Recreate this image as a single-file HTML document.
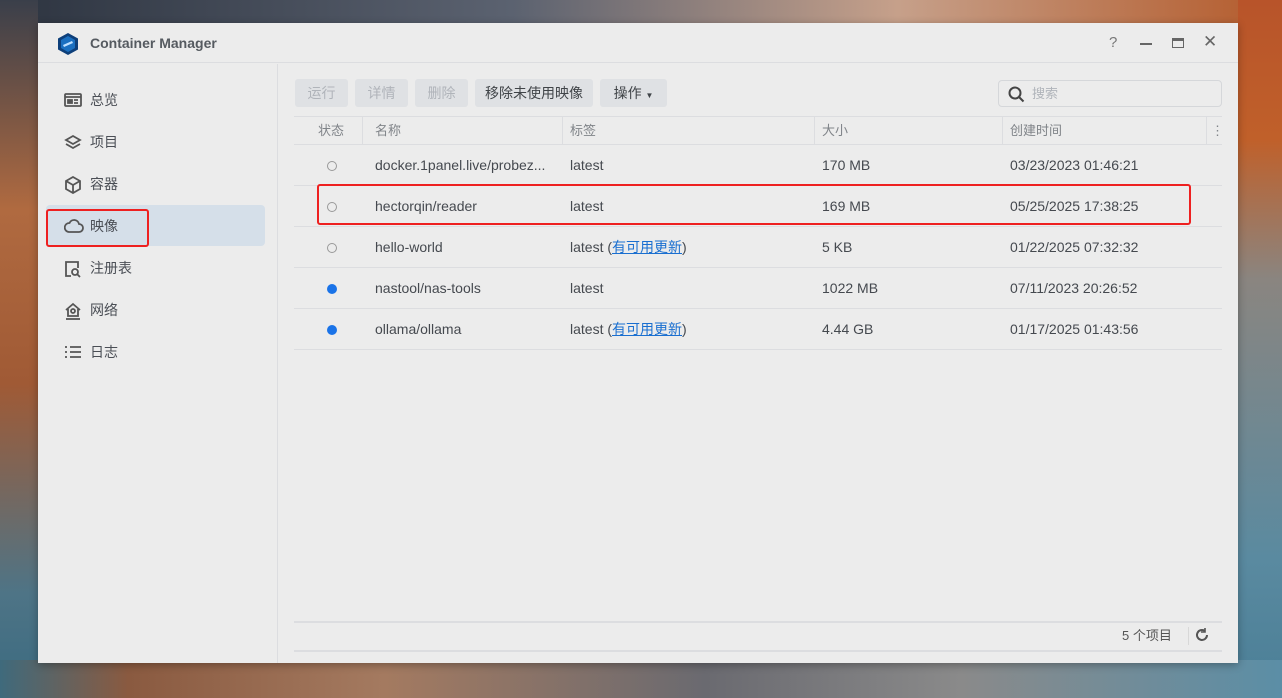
<!DOCTYPE html>
<html><head><meta charset="utf-8"><style>
*{margin:0;padding:0;box-sizing:border-box}
body{width:1282px;height:698px;overflow:hidden;position:relative;font-family:"Liberation Sans","Noto Sans CJK SC",sans-serif;font-size:14px;color:#404448;
background:linear-gradient(90deg,#3a5a6c 0%,#7a6a60 20%,#5f6f80 50%,#6a7c8a 80%,#3e6f86 100%)}
.bgtop{position:absolute;left:0;top:0;width:1282px;height:30px;background:linear-gradient(90deg,#2d3440,#5b6270 40%,#c6a08a 70%,#b45a2a 100%)}
.bgbot{position:absolute;left:0;top:660px;width:1282px;height:38px;background:linear-gradient(90deg,#3f6a7c 0%,#8a5a40 10%,#a47a60 30%,#6a6a70 55%,#8a8a8a 75%,#5b8ea6 100%)}
.bgright{position:absolute;left:1238px;top:0;width:44px;height:698px;background:linear-gradient(180deg,#b8542a 0%,#c0602a 20%,#8a8580 40%,#5a8aa0 80%,#4a7e96 100%)}
.bgleft{position:absolute;left:0;top:0;width:38px;height:698px;background:linear-gradient(180deg,#3a3f4a 0%,#b06a40 30%,#a05a35 55%,#4e7486 85%,#3a6a80 100%)}
.win{position:absolute;left:38px;top:23px;width:1200px;height:640px;background:#ececec;box-shadow:0 2px 8px rgba(0,0,0,.3)}
.title{position:absolute;left:0;top:0;width:1200px;height:40px;border-bottom:1px solid #dcdde0}
.title .t{position:absolute;left:52px;top:12px;font-weight:bold;font-size:14px;color:#555a60}
.side{position:absolute;left:0;top:41px;width:240px;height:599px;border-right:1px solid #dcdde0}
.it{position:absolute;left:8px;width:219px;height:41px;font-size:14px;color:#4a4e55}
.it span{position:absolute;left:44px;top:13px;line-height:17px}
.it svg{position:absolute;left:18px;top:13px}
.act{background:#d5dfe9;border-radius:4px}
.btn{position:absolute;top:56px;height:28px;background:#dfe1e4;border-radius:3px;text-align:center;line-height:28px;font-size:14px}
.dis{color:#b0b4ba}
.en{color:#404448}
.search{position:absolute;left:960px;top:57px;width:224px;height:27px;border:1px solid #d5d7da;border-radius:4px;background:#ececec}
.row{position:absolute;left:256px;width:928px;height:41px;border-bottom:1px solid #dcdde0}
.c{position:absolute;top:12px;font-size:14px;line-height:17px;color:#45494f;white-space:nowrap}
.hd{position:absolute;left:256px;top:93px;width:928px;height:29px;border-top:1px solid #dcdde0;border-bottom:1px solid #dcdde0}
.hd .c{top:6px;color:#808489;font-size:13px;line-height:16px}
.sep{position:absolute;top:0;width:1px;height:28px;background:#dcdde0}
.dot{position:absolute;left:33px;top:16px;width:10px;height:10px;border-radius:50%}
.o{border:1.5px solid #999}
.b{background:#1a73e8}
a{color:#1a6fd0;text-decoration:underline}
.red{position:absolute;border:2.5px solid #ee2020;border-radius:3px}
</style></head><body>
<div class="bgtop"></div><div class="bgleft"></div><div class="bgright"></div><div class="bgbot"></div>
<div class="win">
<div class="title">
<svg style="position:absolute;left:19px;top:9px" width="22" height="24" viewBox="0 0 22 24"><polygon points="11,1 21,6.5 21,17.5 11,23 1,17.5 1,6.5" fill="#0d3f7a"/><polygon points="11,4 18,8 18,16 11,20 4,16 4,8" fill="#1a6fc0"/><path d="M6 13 L15 9 L16 11 L7 15Z" fill="#bfe0ff"/></svg>
<div class="t">Container Manager</div>
<div style="position:absolute;left:1071px;top:11px;color:#777;font-size:15px">?</div>
<div style="position:absolute;left:1102px;top:20px;width:12px;height:2px;background:#666"></div>
<div style="position:absolute;left:1134px;top:15px;width:12px;height:10px;border:1.5px solid #666;border-top-width:3px"></div>
<div style="position:absolute;left:1165px;top:9px;color:#666;font-size:17px">✕</div>
</div>
<div class="side">
<div class="it" style="top:15px"><svg width="18" height="16" viewBox="0 0 18 16" fill="none" stroke="#555" stroke-width="1.8"><rect x="1" y="2" width="16" height="12" rx="1"/><rect x="4" y="8" width="4" height="3" fill="#555"/><path d="M10 8h4M10 11h4M1 5h16"/></svg><span>总览</span></div>
<div class="it" style="top:57px"><svg width="18" height="18" viewBox="0 0 18 18" fill="none" stroke="#555" stroke-width="1.8"><path d="M9 2L16 6L9 10L2 6Z"/><path d="M2 10l7 4 7-4"/></svg><span>项目</span></div>
<div class="it" style="top:99px"><svg width="18" height="18" viewBox="0 0 18 18" fill="none" stroke="#555" stroke-width="1.8"><path d="M9 1L16 5V13L9 17L2 13V5Z"/><path d="M2 5l7 4 7-4M9 9v8"/></svg><span>容器</span></div>
<div class="it act" style="top:141px"><svg width="20" height="16" viewBox="0 0 20 16" fill="none" stroke="#555" stroke-width="1.8"><path d="M5 14h10a4 4 0 0 0 0-8 5 5 0 0 0-9.5-1A4.5 4.5 0 0 0 5 14Z"/></svg><span>映像</span></div>
<div class="it" style="top:183px"><svg width="18" height="18" viewBox="0 0 18 18" fill="none" stroke="#555" stroke-width="1.8"><path d="M7 16H2V2h12v6"/><circle cx="11" cy="12" r="3"/><path d="M13 14l3 3"/></svg><span>注册表</span></div>
<div class="it" style="top:225px"><svg width="18" height="18" viewBox="0 0 18 18" fill="none" stroke="#555" stroke-width="1.8"><path d="M2 8L9 2L16 8M4 7v7h10V7"/><circle cx="9" cy="9" r="2"/><path d="M2 17h14"/></svg><span>网络</span></div>
<div class="it" style="top:267px"><svg width="18" height="16" viewBox="0 0 18 16" fill="none" stroke="#555" stroke-width="1.8"><path d="M1 3h2M1 8h2M1 13h2M6 3h11M6 8h11M6 13h11"/></svg><span>日志</span></div>
</div>
<div class="red" style="left:8px;top:186px;width:103px;height:38px"></div>
<div class="btn dis" style="left:257px;width:53px">运行</div>
<div class="btn dis" style="left:317px;width:53px">详情</div>
<div class="btn dis" style="left:377px;width:53px">删除</div>
<div class="btn en" style="left:437px;width:118px">移除未使用映像</div>
<div class="btn en" style="left:562px;width:67px">操作 <span style="font-size:8px">▼</span></div>
<div class="search"><svg style="position:absolute;left:9px;top:5px" width="17" height="17" viewBox="0 0 17 17" fill="none" stroke="#444" stroke-width="2"><circle cx="7" cy="7" r="5.5"/><path d="M11 11l4.5 4.5"/></svg><span style="position:absolute;left:33px;top:4px;line-height:17px;color:#b0b4ba;font-size:13px">搜索</span></div>
<div class="hd">
<div class="c" style="left:24px">状态</div><div class="sep" style="left:68px"></div>
<div class="c" style="left:81px">名称</div><div class="sep" style="left:268px"></div>
<div class="c" style="left:276px">标签</div><div class="sep" style="left:520px"></div>
<div class="c" style="left:528px">大小</div><div class="sep" style="left:708px"></div>
<div class="c" style="left:716px">创建时间</div><div class="sep" style="left:912px"></div>
<div class="c" style="left:917px">⋮</div>
</div>
<div class="row" style="top:122px"><div class="dot o"></div><div class="c" style="left:81px">docker.1panel.live/probez...</div><div class="c" style="left:276px">latest</div><div class="c" style="left:528px">170 MB</div><div class="c" style="left:716px">03/23/2023 01:46:21</div></div>
<div class="row" style="top:163px"><div class="dot o"></div><div class="c" style="left:81px">hectorqin/reader</div><div class="c" style="left:276px">latest</div><div class="c" style="left:528px">169 MB</div><div class="c" style="left:716px">05/25/2025 17:38:25</div></div>
<div class="row" style="top:204px"><div class="dot o"></div><div class="c" style="left:81px">hello-world</div><div class="c" style="left:276px">latest (<a>有可用更新</a>)</div><div class="c" style="left:528px">5 KB</div><div class="c" style="left:716px">01/22/2025 07:32:32</div></div>
<div class="row" style="top:245px"><div class="dot b"></div><div class="c" style="left:81px">nastool/nas-tools</div><div class="c" style="left:276px">latest</div><div class="c" style="left:528px">1022 MB</div><div class="c" style="left:716px">07/11/2023 20:26:52</div></div>
<div class="row" style="top:286px"><div class="dot b"></div><div class="c" style="left:81px">ollama/ollama</div><div class="c" style="left:276px">latest (<a>有可用更新</a>)</div><div class="c" style="left:528px">4.44 GB</div><div class="c" style="left:716px">01/17/2025 01:43:56</div></div>
<div class="red" style="left:279px;top:161px;width:874px;height:41px"></div>
<div style="position:absolute;left:256px;top:598px;width:928px;height:2px;background:#dcdde0"></div>
<div style="position:absolute;left:256px;top:627px;width:928px;height:2px;background:#dcdde0"></div>
<div style="position:absolute;left:1084px;top:605px;font-size:13px;line-height:16px;color:#555">5 个项目</div>
<div style="position:absolute;left:1150px;top:604px;width:1px;height:18px;background:#d8d8d8"></div>
<svg style="position:absolute;left:1157px;top:605px" width="14" height="14" viewBox="0 0 14 14" fill="none" stroke="#555" stroke-width="2"><path d="M12 7A5 5 0 1 1 10 3"/><path d="M10 0v4h-4" stroke-width="1.6"/></svg>
</div>
</body></html>
